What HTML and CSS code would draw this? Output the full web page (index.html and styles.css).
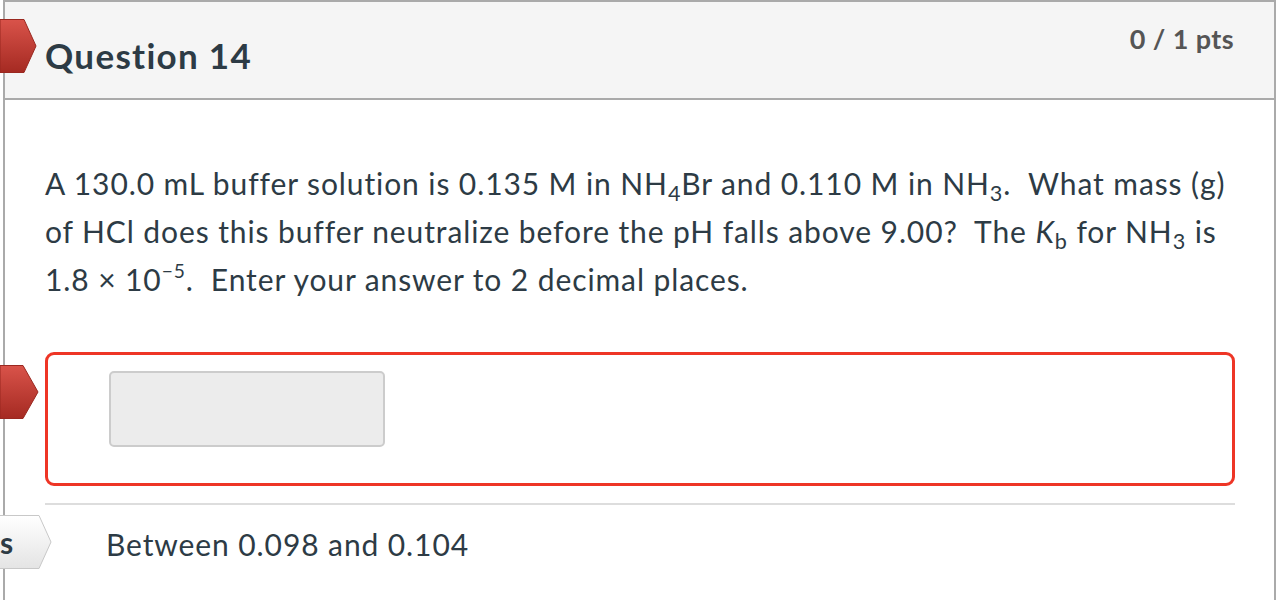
FILE: index.html
```html
<!DOCTYPE html>
<html lang="en">
<head>
<meta charset="utf-8">
<title>Question 14</title>
<link rel="stylesheet" href="styles.css">
</head>
<body>
<div class="question">
  <div class="header">
    <svg class="flag flag-header" width="40" height="56" viewBox="0 0 40 56">
      <defs>
        <linearGradient id="red1" x1="0" y1="0" x2="0" y2="1">
          <stop offset="0" stop-color="#d9534a"/>
          <stop offset="1" stop-color="#a52a22"/>
        </linearGradient>
      </defs>
      <polygon points="0,0.5 24,0.5 36,27 24,53.5 0,53.5" fill="url(#red1)" stroke="#9a2820" stroke-width="1"/>
    </svg>
    <h2 class="title">Question 14</h2>
    <div class="pts">0 / 1 pts</div>
  </div>
  <div class="body">
    <p class="text">A 130.0 mL buffer solution is 0.135 M in NH<sub>4</sub>Br and 0.110 M in NH<sub>3</sub>.&nbsp; What mass (g) of HCl does this buffer neutralize before the pH falls above 9.00?&nbsp; The <i>K</i><sub>b</sub> for NH<sub>3</sub> is 1.8 × 10<sup>−5</sup>.&nbsp; Enter your answer to 2 decimal places.</p>
    <div class="answer-row">
      <svg class="flag flag-answer" width="40" height="56" viewBox="0 0 40 56">
        <defs>
          <linearGradient id="red2" x1="0" y1="0" x2="0" y2="1">
            <stop offset="0" stop-color="#d9534a"/>
            <stop offset="1" stop-color="#a52a22"/>
          </linearGradient>
        </defs>
        <polygon points="0,0.5 23,0.5 38,27 23,53.5 0,53.5" fill="url(#red2)" stroke="#9a2820" stroke-width="1"/>
      </svg>
      <div class="answer-box">
        <div class="input"></div>
      </div>
    </div>
    <div class="correct-row">
      <div class="tag">
        <svg class="tag-shape" width="54" height="56" viewBox="0 0 54 56">
          <defs>
            <linearGradient id="gray1" x1="0" y1="0" x2="0" y2="1">
              <stop offset="0" stop-color="#ffffff"/>
              <stop offset="1" stop-color="#e4e4e4"/>
            </linearGradient>
          </defs>
          <polygon points="-2,0.5 39,0.5 51,27 39,53.5 -2,53.5" fill="url(#gray1)" stroke="#c8c8c8" stroke-width="1"/>
        </svg>
        <span class="tag-text">s</span>
      </div>
      <div class="correct-text">Between 0.098 and 0.104</div>
    </div>
  </div>
</div>
</body>
</html>
```

FILE: styles.css
```css
html, body {
  margin: 0;
  padding: 0;
  background: #ffffff;
}

body {
  font-family: Lato, "Open Sans", sans-serif;
  color: #2d3b45;
  overflow: hidden;
}

.question {
  position: relative;
  margin: 0 2px 0 3px;
  border: 2px solid #aaaaaa;
  border-bottom: none;
  min-height: 620px;
}

.header {
  position: relative;
  display: flex;
  justify-content: space-between;
  align-items: flex-start;
  height: 96px;
  padding: 0 40px;
  background: #f5f5f5;
  border-bottom: 2px solid #aaaaaa;
}

.flag {
  position: absolute;
  left: -5px;
  display: block;
}

.flag-header {
  top: 17px;
}

.title {
  margin: 33px 0 0;
  font-size: 35px;
  line-height: 40px;
  letter-spacing: 1.3px;
  font-weight: 700;
  color: #2d3b45;
}

.pts {
  margin-top: 22px;
  font-size: 27px;
  line-height: 30px;
  letter-spacing: 0.4px;
  font-weight: 700;
  color: #555555;
}

.body {
  padding: 59px 39px 0 40px;
}

.text {
  margin: 0;
  font-size: 30px;
  line-height: 48px;
  letter-spacing: 0.9px;
}

.text sub,
.text sup {
  line-height: 0;
  position: relative;
  vertical-align: baseline;
}

.text sub {
  font-size: 0.72em;
  top: 0.3em;
}

.text sup {
  font-size: 0.64em;
  top: -0.68em;
}

.answer-row {
  margin-top: 49px;
}

.answer-row .flag-answer {
  top: 363px;
}

.answer-box {
  border: 3px solid #ee3526;
  border-radius: 9px;
  padding: 16px 0 0 61px;
  box-sizing: border-box;
  height: 134px;
}

.input {
  width: 272px;
  height: 72px;
  background: #ececec;
  border: 2px solid #cccccc;
  border-radius: 5px;
}

.correct-row {
  display: flex;
  align-items: center;
  margin-top: 17px;
  border-top: 2px solid #dddddd;
  height: 78px;
}

.tag {
  position: absolute;
  left: -5px;
  top: 513px;
  width: 54px;
  height: 56px;
}

.tag-shape {
  display: block;
}

.tag-text {
  position: absolute;
  left: 0;
  top: 10px;
  font-size: 30px;
  line-height: 34px;
  font-weight: 700;
  color: #2d3b45;
}

.correct-text {
  margin-left: 61px;
  font-size: 30px;
  line-height: 40px;
  letter-spacing: 0.9px;
}
```
